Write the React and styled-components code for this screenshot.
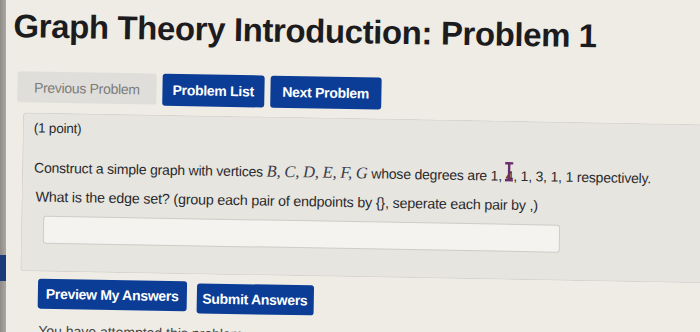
import React from "react";
import styled, { createGlobalStyle } from "styled-components";

const Global = createGlobalStyle`
  html, body {
    margin: 0;
    padding: 0;
    background: #eeebe5;
    font-family: "Liberation Sans", Arial, sans-serif;
    overflow: hidden;
  }
`;

let Screen = styled.div`
  display: flex;
  width: 700px;
  height: 332px;
  overflow: hidden;
  background: #efece6;
`;
let Bezel = styled.div`
  position: relative;
  z-index: 1;
  width: 6px;
  flex-shrink: 0;
  display: flex;
  flex-direction: column;
  background: linear-gradient(90deg, #8f8b86, #aaa6a0);
`;
let BezelMark = styled.div`
  margin-top: 255px;
  height: 26px;
  background: #1b3c7a;
`;
/* the photo is taken at a slight tilt, so the page leans by about a degree */
let Page = styled.div`
  flex-shrink: 0;
  width: 740px;
  padding: 4px 0 0 8px;
  display: flex;
  flex-direction: column;
  transform: rotate(1deg);
  transform-origin: 0 0;
`;
let Title = styled.h1`
  margin: 0;
  font-size: 33px;
  font-weight: 700;
  color: #1c1c1e;
  letter-spacing: -0.4px;
  line-height: 44px;
`;
let Nav = styled.div`
  display: flex;
  gap: 6px;
  margin: 23px 0 0 5px;
  align-items: flex-start;
`;
let Button = styled.button`
  font-family: "Liberation Sans", Arial, sans-serif;
  font-size: 14px;
  border: none;
  border-radius: 3px;
  padding: 0 ${(p) => p.$px || 12}px;
  height: ${(p) => p.$h || 31}px;
  margin-top: ${(p) => p.$drop || 0}px;
  background: ${(p) => (p.$muted ? "#e0deda" : "#0b3d97")};
  color: ${(p) => (p.$muted ? "#7c7b79" : "#ffffff")};
  font-weight: ${(p) => (p.$muted ? 400 : 700)};
  letter-spacing: -0.3px;
  white-space: nowrap;
`;
let Problem = styled.div`
  margin: 9px 0 0 11px;
  background: #e7e5e0;
  border: 1px solid #d6d3ce;
  border-right: none;
  border-radius: 4px 0 0 4px;
  padding: 6px 0 27px 10px;
  display: flex;
  flex-direction: column;
`;
let Text = styled.p`
  margin: ${(p) => p.$mt || 0}px 0 0 ${(p) => p.$ml || 0}px;
  font-size: ${(p) => p.$size || 14.3}px;
  color: #2a2a2c;
  line-height: 18px;
  letter-spacing: -0.2px;
  white-space: nowrap;
`;
let Math = styled.span`
  font-family: "Liberation Serif", "Times New Roman", serif;
  font-style: italic;
  font-size: 16.5px;
  line-height: 14px;
  color: #3a3a48;
`;
let CursorWrap = styled.span`
  position: relative;
  display: inline-block;
`;
let Cursor = styled.svg`
  position: absolute;
  left: -2px;
  top: -5px;
`;
let Answer = styled.div`
  margin: 10px 0 0 11px;
  width: 517px;
  height: 28px;
  box-sizing: border-box;
  background: #f4f3f0;
  border: 1px solid #cfccc7;
  border-radius: 3px;
`;
let Actions = styled.div`
  display: flex;
  gap: 10px;
  margin: 7px 0 0 29px;
  align-items: flex-start;
`;
let Footer = styled.div`
  margin: 12px 0 0 30px;
  font-size: 14px;
  line-height: 16px;
  color: #444;
`;

const Degree = () => (
  <CursorWrap>
    4
    <Cursor width="10" height="20" viewBox="0 0 10 20">
      <path
        d="M1 1.5h8M5 1.5v17M1 18.5h8"
        stroke="#6b2d6e"
        strokeWidth="2.4"
        fill="none"
      />
    </Cursor>
  </CursorWrap>
);

const App = () => {
  return (
    <>
      <Global />
      <Screen>
        <Bezel>
          <BezelMark />
        </Bezel>
        <Page>
          <Title>Graph Theory Introduction: Problem 1</Title>
          <Nav>
            <Button $muted $h={31} $px={16.5}>Previous Problem</Button>
            <Button $h={32} $px={10.5}>Problem List</Button>
            <Button $h={32} $px={12}>Next Problem</Button>
          </Nav>
          <Problem>
            <Text $size={13.5}>(1 point)</Text>
            <Text $mt={21} $ml={1} $size={14}>
              Construct a simple graph with vertices{" "}
              <Math>B, C, D, E, F, G</Math> whose degrees are 1, <Degree />, 1,
              3, 1, 1 respectively.
            </Text>
            <Text $mt={11} $ml={3}>
              What is the edge set? (group each pair of endpoints by {"{}"},
              seperate each pair by ,)
            </Text>
            <Answer />
          </Problem>
          <Actions>
            <Button $h={30} $px={8}>Preview My Answers</Button>
            <Button $drop={2} $h={30} $px={6}>Submit Answers</Button>
          </Actions>
          <Footer>You have attempted this problem</Footer>
        </Page>
      </Screen>
    </>
  );
};

export default App;
